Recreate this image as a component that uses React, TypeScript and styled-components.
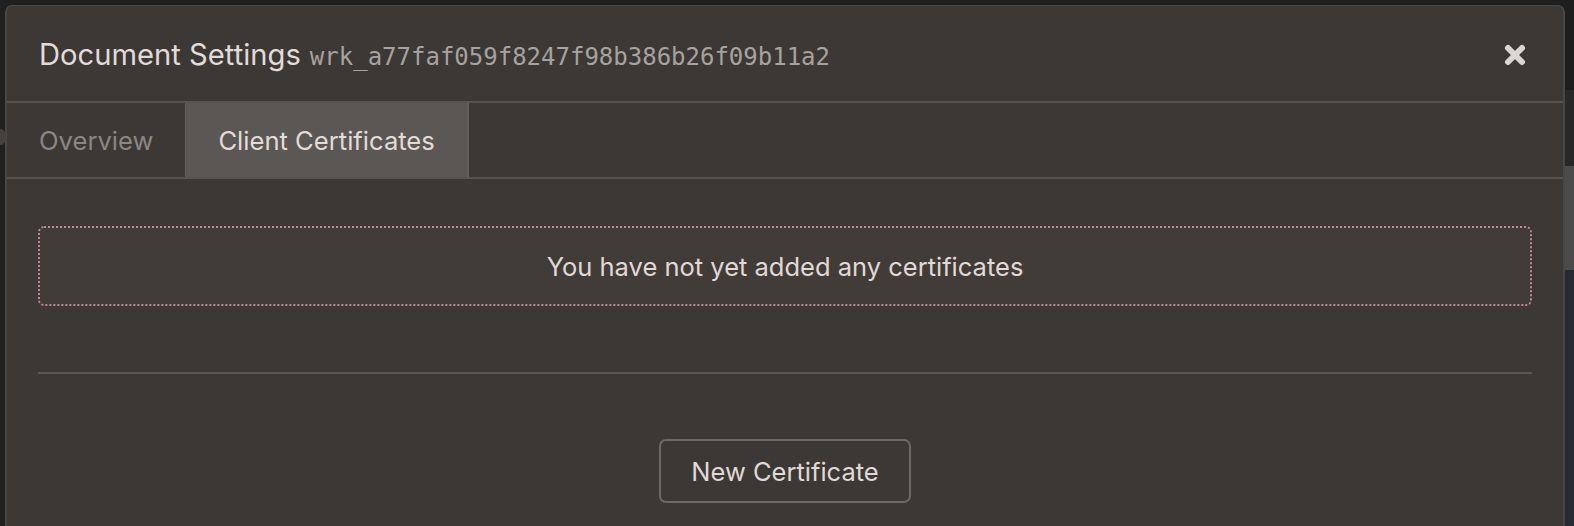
import React from "react";
import styled, { createGlobalStyle } from "styled-components";

const Global = createGlobalStyle`
  html, body { margin: 0; padding: 0; background: #1f1f1f; }
  body { font-family: Inter, "Noto Sans", sans-serif; -webkit-font-smoothing: antialiased; }
  * { box-sizing: border-box; }
`;

const Page = styled.div`
  width: 1574px;
  height: 526px;
  overflow: hidden;
  display: flex;
  align-items: flex-start;
  background: #1f1f1f;
`;

const LeftGutter = styled.div`
  width: 5px;
  height: 526px;
  flex: none;
  background: #202020;
  position: relative;
`;

const Bump = styled.div`
  position: absolute;
  left: -4px;
  top: 129px;
  width: 10px;
  height: 16px;
  border-radius: 50%;
  background: #45413e;
`;

const RightStrip = styled.div`
  flex: 1;
  height: 526px;
  display: flex;
  flex-direction: column;
`;

const StripBlock = styled.div<{ $h?: number; $bg: string }>`
  height: ${(p) => (p.$h ? `${p.$h}px` : "auto")};
  flex: ${(p) => (p.$h ? "none" : "1")};
  background: ${(p) => p.$bg};
`;

const Modal = styled.div`
  margin-top: 5px;
  width: 1560px;
  height: 560px;
  flex: none;
  background: #3c3835;
  border: 2px solid #4a4643;
  border-top-width: 1px;
  border-radius: 7px 7px 0 0;
  display: flex;
  flex-direction: column;
`;

const Header = styled.div`
  height: 97px;
  flex: none;
  display: flex;
  align-items: center;
  justify-content: space-between;
  padding: 0 33px 0 32px;
  border-bottom: 2px solid #58534f;
`;

const Title = styled.div`
  display: flex;
  align-items: baseline;
  gap: 9px;
  color: #e2dbd7;
  font-size: 29.2px;
  font-weight: 400;
  padding-top: 2px;
`;

const Mono = styled.span`
  font-family: "DejaVu Sans Mono", "Liberation Mono", monospace;
  font-size: 24px;
  color: #a8a29e;
`;

const CloseButton = styled.button`
  width: 30px;
  height: 30px;
  padding: 0;
  border: 0;
  background: transparent;
  display: flex;
  align-items: center;
  justify-content: center;
  margin-top: 3px;
`;

const Tabs = styled.div`
  height: 76px;
  flex: none;
  display: flex;
  border-bottom: 2px solid #58534f;
`;

const Tab = styled.div<{ $active?: boolean }>`
  display: flex;
  align-items: center;
  padding: 0 32px;
  font-size: 25.6px;
  color: ${(p) => (p.$active ? "#e2dbd7" : "#8b8683")};
  background: ${(p) => (p.$active ? "#5b5754" : "transparent")};
  border-right: 2px solid #625e5b;
  &:first-child { border-right-width: 1px; }
`;

const Content = styled.div`
  padding: 47px 31px 0 31px;
  display: flex;
  flex-direction: column;
`;

const EmptyBox = styled.div`
  height: 80px;
  display: flex;
  align-items: center;
  justify-content: center;
  background: #423c39;
  border: 2px dotted #c48597;
  border-radius: 6px;
  color: #e0d9d5;
  font-size: 25.5px;
`;

const Divider = styled.hr`
  margin: 66px 0 0 0;
  border: 0;
  height: 2px;
  background: #5a5654;
`;

const ButtonRow = styled.div`
  display: flex;
  justify-content: center;
  padding-top: 65px;
`;

const Button = styled.button`
  height: 64px;
  width: 252px;
  border: 2px solid #6c6865;
  border-radius: 7px;
  background: transparent;
  color: #e0d9d5;
  font-family: Inter, "Noto Sans", sans-serif;
  font-size: 25.5px;
  padding: 0;
`;

export default function App() {
  return (
    <>
      <Global />
      <Page>
        <LeftGutter>
          <Bump />
        </LeftGutter>
        <Modal>
          <Header>
            <Title>
              Document Settings <Mono>wrk_a77faf059f8247f98b386b26f09b11a2</Mono>
            </Title>
            <CloseButton aria-label="Close">
              <svg width="22" height="22" viewBox="0 0 22 22">
                <path d="M4 4 L18 18 M18 4 L4 18" stroke="#dcd6d2" strokeWidth="6" strokeLinecap="round" />
              </svg>
            </CloseButton>
          </Header>
          <Tabs>
            <Tab>Overview</Tab>
            <Tab $active>Client Certificates</Tab>
          </Tabs>
          <Content>
            <EmptyBox>You have not yet added any certificates</EmptyBox>
            <Divider />
            <ButtonRow>
              <Button>New Certificate</Button>
            </ButtonRow>
          </Content>
        </Modal>
        <RightStrip>
          <StripBlock $h={90} $bg="#1e1e1e" />
          <StripBlock $h={76} $bg="#282828" />
          <StripBlock $h={104} $bg="#4b4b4b" />
          <StripBlock $bg="#262b33" />
        </RightStrip>
      </Page>
    </>
  );
}
